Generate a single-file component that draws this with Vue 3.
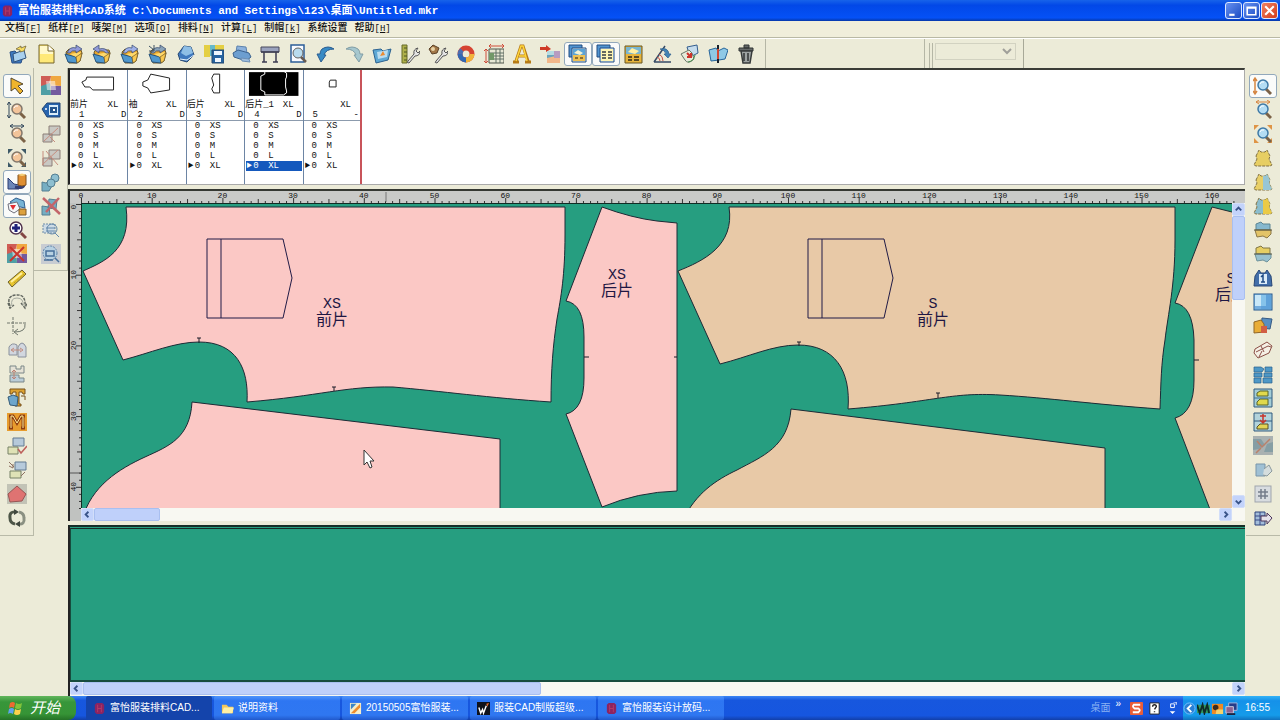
<script setup>
import { ref } from 'vue'

const menus = [
  ['文档', 'F'], ['纸样', 'P'], ['唛架', 'M'], ['选项', 'O'], ['排料', 'N'],
  ['计算', 'L'], ['制帽', 'k'], ['系统设置', ''], ['帮助', 'H']
]

// small pieces shared by several icons
const lens = (fill, rim) =>
  `<path d="M13 13l5 5" stroke="#7b6247" stroke-width="3"/><circle cx="10" cy="9" r="5" fill="${fill}" stroke="${rim}" stroke-width="1.5"/><path d="M7 8q1-3 4-2" stroke="#fff" fill="none"/>`
const folder = (arrow, mirror) =>
  `<path d="M2 8l3-3 4 1h8l1 3-2 8-3 2H5z" fill="#e7a72c" stroke="#6e5a2c"/><path d="M4 18L1 10l11 3 1 6z" fill="#4f97cd" stroke="#28547c"/><path d="M6 10l11-2-2 4-3 1z" fill="#ffd96b"/><path d="M12 13l6-4-2 8-3 2z" fill="#f9c84f" stroke="#6e5a2c" stroke-width=".7"/>` +
  `<path d="${mirror ? 'M17 9Q14 3 7 5V1L1 5l6 4V7q5-1 7 2z' : 'M3 9Q6 2 12 4V1l6 4-6 4V7Q8 6 6 9z'}" fill="${arrow}" stroke="#34466c" stroke-width=".7"/>`
const garment = fill =>
  `<path d="M3 8l3-6 2 2h4l2-2 3 6-1 3 3 6-2 1H3l-2-1 3-6z" fill="${fill}" stroke="#817143" stroke-dasharray="3 1"/>`
const corners = color =>
  `<path d="M1 1h5L1 6zM19 1v5l-5-5zM1 19v-5l5 5zM19 19h-5l5-5z" fill="${color}"/>`
const wrench = '<path d="M8 17l6-7q-1-5 4-6l-2 3 2 2 2-2q0 5-5 5l-6 7q-3 0-1-2z" fill="#e4e4e4" stroke="#555"/>'
const rainbow = '<rect width="20" height="19" fill="#e8b483"/><path d="M0 0h10L7 10H0z" fill="#cf5d55"/><path d="M10 0h10v10l-10-2z" fill="#f0a840"/><path d="M0 10l9-3 1 12H0z" fill="#4f9fa5"/><path d="M10 10h10v9H10z" fill="#735a9e"/><path d="M5 5h9l1 9H6z" fill="#fff" opacity=".5"/>'
const windows = '<path d="M1 1h13v12H1z" fill="#5094d1" stroke="#234c80"/><path d="M4 4h14v14H4z" fill="#d8edf8" stroke="#234c80"/>'

const icons = {
  open: '<path d="M2 8l5-1 2 2h7l-3 10H4z" fill="#3d79c0" stroke="#294f85"/><path d="M5 10l11-4 2 8-12 4z" fill="#a9d0ee" stroke="#31527b"/><path d="M8 5l5-3v2l5-2-2 5-4 1V6z" fill="#f7dc62" stroke="#685b30" stroke-width=".7"/>',
  fresh: '<path d="M3 1h9l6 5v13H3z" fill="#ffe978" stroke="#75642c"/><path d="M4 2h8v5h5v3H4z" fill="#fff8ca"/><path d="M12 1v6h6" fill="#fff" stroke="#75642c"/>',
  importIn: folder('#9199d8'),
  importBack: folder('#9199d8', true),
  merge: folder('#a0b1e8'),
  append: folder('#8aa3b8') + '<path d="M1 2l5 4M6 1v6H1" stroke="#3e5365" fill="none"/>',
  book: '<path d="M8 2l7 1 3 8-7 7-7-2-2-6z" fill="#3f79be" stroke="#284973"/><path d="M8 2l7 1 2 6-7 3-5-3z" fill="#8fbfe6"/><path d="M4 15l7 1 7-5" stroke="#e8f4fc" fill="none"/>',
  save: '<path d="M0 1h14v11H0z" fill="#66b9c9"/><path d="M0 1h6v12H0zM11 1h9v6h-9z" fill="#e4cf44"/><path d="M8 6h12v13H8z" fill="#2563a0" stroke="#244970"/><path d="M10 7h8v4h-8zM11 14h6v4h-6z" fill="#eef6ff"/>',
  print: '<path d="M5 2l9 1 1 6-11-1z" fill="#8db2dc" stroke="#5c82ad"/><path d="M1 9l5-3 11 3 2 4-5 4-12-4z" fill="#6c9ed0" stroke="#3c638f"/><path d="M9 14l8 1 1 3-8-1z" fill="#9ebddd" stroke="#6c8fb5"/>',
  plotter: '<path d="M1 3h18v5H1z" fill="#9aa2bd" stroke="#49495d"/><path d="M4 8v10M16 8v10M2 18h5M13 18h5M1 8h18" stroke="#3d3d52" stroke-width="1.5"/>',
  preview: '<path d="M3 1h13v17H3z" fill="#f8faff" stroke="#2b5e98" stroke-width="1.5"/><circle cx="10" cy="9" r="5" fill="#b8dbee" stroke="#63605d"/><path d="M13 13l5 5" stroke="#695b51" stroke-width="2.5"/>',
  undo: '<path d="M18 5Q12 1 6 5 4 7 4 10H1l4 8 5-7H8q2-6 10-6z" fill="#388bc5" stroke="#2a5c90"/>',
  redo: '<path d="M2 5q6-4 12 0 2 2 2 5h3l-4 8-5-7h2Q10 5 2 5z" fill="#a6c7ce" stroke="#809da5"/>',
  folderBlue: '<path d="M1 6l8-1 2 2 8-2-3 11-12 3z" fill="#5ea8d4" stroke="#2c6290"/><path d="M5 8l11-2-1 7-9 2z" fill="#b9dcf0"/><path d="M8 12l3-5 2 4z" fill="#ec8b31"/>',
  rulerSet: '<path d="M2 1h5v18H2z" fill="#afb04a" stroke="#666a28"/><path d="M4 4h3M4 8h3M4 12h3M4 16h3" stroke="#4c5420"/>' + wrench,
  tools: '<path d="M1 5l4-4 6 3-2 5-5 1z" fill="#a17646" stroke="#5b4228"/><circle cx="5" cy="5" r="2" fill="#e7d2a6"/>' + wrench,
  ring: '<circle cx="10" cy="10" r="6" fill="none" stroke="#d64332" stroke-width="5"/><path d="M4 10a6 6 0 0 0 6 6" fill="none" stroke="#3268b4" stroke-width="5"/><path d="M10 16a6 6 0 0 0 6-6" fill="none" stroke="#f1b33b" stroke-width="5"/><path d="M4 10a6 6 0 0 1 2-4" fill="none" stroke="#4d6db0" stroke-width="5"/>',
  table: '<path d="M5 5h15v14H5z" fill="#e6e7d4" stroke="#50574c"/><path d="M5 9h15M5 12h15M5 15h15M12 5v14M16 5v14" stroke="#617067"/><path d="M5 9h5v7H5z" fill="#719869"/><path d="M6 2h14M7 0L5 2l2 2M18 0l2 2-2 2M2 5v14M0 7l2-2 2 2M0 17l2 2 2-2" stroke="#cf4c3b" fill="none"/>',
  letter: '<path d="M4 17L9 2h2l5 15M7 12h7M1 18h6M13 18h6" fill="none" stroke="#b67b16" stroke-width="3"/><path d="M4 17L9 2h2l4 15M7 12h7" fill="none" stroke="#ffd63d" stroke-width="1.5"/>',
  shift: '<path d="M0 3h6V1l5 4-5 3V6H0z" fill="#cf3a27"/><path d="M7 7h13v12H7z" fill="#69a4bd"/><path d="M7 7h13v4H7z" fill="#b6dbe1"/><path d="M7 14l13-3v8H7z" fill="#f2b78a"/><path d="M14 7h6v7h-6z" fill="#b79bc0"/>',
  sheetMap: windows + '<path d="M5 5h12v6H5z" fill="#5aa3d6"/><path d="M6 9l4-3 5 3-3 2z" fill="#f3f2d4"/><path d="M5 11h12v6H5z" fill="#eec052"/><path d="M7 14h3M12 14h3" stroke="#6c5224" stroke-width="1.5"/>',
  sheetList: windows + '<path d="M5 5h12v12H5z" fill="#fff6b3"/><path d="M6 8h4M12 8h4M6 11h4M12 11h4M6 14h4M12 14h4" stroke="#343d46" stroke-width="1.5"/>',
  chart: '<path d="M1 2h17v17H1z" fill="#e6b43d" stroke="#675724"/><path d="M2 3h15v7H2z" fill="#79b6d2"/><path d="M4 8l4-4 7 3-4 3z" fill="#fff0a4"/><path d="M4 13h4M10 13h5M4 16h4M10 16h5" stroke="#5a4a22" stroke-width="2"/>',
  angle: '<path d="M2 18h17M2 18L13 2" fill="none" stroke="#364a64" stroke-width="1.5"/><path d="M8 5q8-2 9 5h2l-3 4-4-4h2q-1-4-6-5z" fill="#4284b5" stroke="#2d5c8c" stroke-width=".7"/><path d="M7 10q4 2 4 7M5 13q3 1 3 4" fill="none" stroke="#c54d43"/>',
  flip: '<path d="M7 3l10-2 1 8-8 4z" fill="#c5dced" stroke="#345e8e"/><path d="M1 10l8-4 3 3 2 6q-6 6-9 1z" fill="#e6ebda" stroke="#6a7769"/><path d="M7 9l4 4M11 9v4H7" stroke="#ce332c" stroke-width="2" fill="none"/><path d="M15 11q-1 6-7 7" stroke="#489150" fill="none"/>',
  mirror: '<path d="M1 6l7-2 2 3 6-3 4 2-3 9-6 1-8 1z" fill="#8fc9e6" stroke="#28669b"/><path d="M10 1v18" stroke="#17202d" stroke-width="2"/><path d="M10 5v10" stroke="#d34834" stroke-width="2"/>',
  bin: '<path d="M3 4h14v3H3zM8 1h5v3H8z" fill="#656969" stroke="#303535"/><path d="M5 7h11l-2 12H7z" fill="#9da3a2" stroke="#373b3b" stroke-width="1.5"/><path d="M8 9v8M12 9v8" stroke="#313434" stroke-width="1.5"/>',
  pointer: '<path d="M4 2v13l4-3 5 6 3-3-5-5 5-2z" fill="#efb52c" stroke="#544832"/>',
  zoomV: lens('#f3c49a', '#81776c') + '<path d="M2 2v16M0 5l2-3 2 3M0 15l2 3 2-3" fill="none" stroke="#33485c"/>',
  zoomH: lens('#f3c49a', '#81776c') + '<path d="M3 2h14M6 0L3 2l3 2M14 0l3 2-3 2" fill="none" stroke="#33485c"/>',
  zoomFit: corners('#3e5967') + lens('#f4c69b', '#82776b'),
  drop: '<path d="M1 6l6 6 5 1v4H1z" fill="#6c86b8" stroke="#2d3d73"/><path d="M8 15q9 2 9-3" fill="none" stroke="#343f74" stroke-width="3"/><path d="M11 3h8v10q-4 2-8 0z" fill="#e08f32" stroke="#80501f"/><path d="M11 3q4-3 8 0-4 2-8 0z" fill="#f6cf7a"/>',
  bags: '<path d="M3 6l6-4 8 3 1 7-9-2z" fill="#77b4d6" stroke="#315f90"/><path d="M1 8l9-2 3 7-6 4-5-3z" fill="#f5f7f9" stroke="#71717d"/><path d="M3 9l3 5 3-5z" fill="#e12e33"/><path d="M12 13h7v6h-7z" fill="#dda13e" stroke="#7f5927"/>',
  zoomIn: '<circle cx="9" cy="8" r="6" fill="#fff" stroke="#4f314d" stroke-width="1.5"/><path d="M14 13l5 5" stroke="#824643" stroke-width="3"/><path d="M5 8h8M9 4v8" stroke="#20227a" stroke-width="3"/>',
  noColor: rainbow + '<path d="M3 3l14 14M17 3L3 17" stroke="#c9342b" stroke-width="2"/>',
  ruler: '<path d="M1 14L15 2l4 4L5 19z" fill="#e8c52e" stroke="#6c602c"/><path d="M4 14L15 5" stroke="#fff0a0" stroke-width="2"/><path d="M7 15l10-9" stroke="#a88d27" stroke-dasharray="1 1"/>',
  turn: '<path d="M3 14Q-1 4 9 3q10-1 9 11M1 11l2 5 4-3M14 11l4 5 2-5" fill="none" stroke="#61665f" stroke-width="1.5" stroke-dasharray="3 1"/><path d="M5 14Q3 6 10 6t6 8" fill="none" stroke="#a5a99f"/>',
  axis: '<path d="M6 1v17M0 7h19" fill="none" stroke="#70776d" stroke-dasharray="3 1"/><path d="M18 8q1 8-10 8M11 13l-4 3 4 3" fill="none" stroke="#70776d"/>',
  pair: '<path d="M2 7q3-5 8-2v10H2zM11 7q4-8 8 0v10h-8z" fill="#d2d7df" stroke="#8a919c"/><path d="M5 10h9M7 8l-3 2 3 2M13 8l3 2-3 2" stroke="#c28c7c" fill="none"/>',
  pairV: '<path d="M3 2h6v3h5V2h3v7H3z" fill="#e5e2d6" stroke="#7b8788"/><path d="M3 11h9v3h5v4H3z" fill="#b9ccd8" stroke="#7b8788"/><path d="M7 6v9M5 8l2-2 2 2M5 13l2 2 2-2" stroke="#bd8173" fill="none"/>',
  textTool: '<path d="M3 1h15v5h-2l-1-2h-3v12h2v2H8v-2h1V4H6L5 6H3z" fill="#dda22f" stroke="#77511c"/><path d="M1 9l5-2 5 2-1 9-7-1z" fill="#6ea6cb" stroke="#365c79"/><path d="M14 8h4v4" fill="none" stroke="#77511c"/>',
  mark: '<path d="M0 1h20v18H0z" fill="#e79c2e"/><path d="M4 16V4h2l4 7 4-7h2v12M2 16h4M14 16h4M2 4h4M14 4h4" fill="none" stroke="#8d3c12" stroke-width="3"/><path d="M4 16V4h2l4 7 4-7h2v12" fill="none" stroke="#fff29c"/>',
  stackCheck: '<path d="M6 2h11v8H6z" fill="#b6c9da" stroke="#637b91"/><path d="M1 11h10v7H1z" fill="#dfe2b6" stroke="#778167"/><path d="M11 13l3 4 6-7" fill="none" stroke="#bd615c" stroke-width="1.5"/>',
  stackMove: '<path d="M8 2h11v8H8z" fill="#b6cadb" stroke="#637b91"/><path d="M3 11h11v7H3z" fill="#dfe2b6" stroke="#778167"/><path d="M2 2l5 5M18 12l-4 4M2 6l4 2V4" fill="none" stroke="#8c7061"/>',
  house: '<rect width="20" height="20" fill="#c2c3b6"/><path d="M10 2l9 8-4 7-12 1-2-8z" fill="#df7372" stroke="#975553"/>',
  cycle: '<path d="M9 4Q2 3 3 10q0 5 5 6" fill="none" stroke="#4d5547" stroke-width="3"/><path d="M11 16q7 1 6-6 0-5-5-6" fill="none" stroke="#8a9082" stroke-width="3"/><path d="M7 1v6l5-3zM13 19v-6l-5 3z" fill="#41483f"/>',
  palette: rainbow,
  tag: '<path d="M1 9l5-6h13v14H6z" fill="#2764ae" stroke="#244573"/><rect x="8" y="5" width="9" height="10" fill="#d9ecf9"/><path d="M9 7h7v6H9z" fill="#24558e"/><path d="M12 9h2v2h-2z" fill="#fff"/><circle cx="5" cy="9" r="1" fill="#fff"/>',
  copyCut: '<path d="M8 2h11v9H8zM2 10h9v8H2z" fill="#c9c8c3" stroke="#8c7e79"/><path d="M3 17L17 4M9 13l5 5" stroke="#c68d7f"/>',
  copyCuts: '<path d="M8 2h11v9H8zM2 10h9v8H2z" fill="#c9c8c3" stroke="#8c7e79"/><path d="M1 17L17 2M5 3l12 14M2 3v14" stroke="#c68d7f"/>',
  blobs: '<path d="M1 10l4 1 3-2 3 5-3 5H1z" fill="#76aec3" stroke="#547e91"/><circle cx="14" cy="6" r="4" fill="#8ebfd0" stroke="#547e91"/><circle cx="10" cy="11" r="4" fill="#8ebfd0" stroke="#547e91"/>',
  blobsOff: '<path d="M1 10l7 1 1 8H1zM8 3l8 1-1 9-8-1z" fill="#76aec3" stroke="#547e91"/><path d="M2 2l17 16M18 2L5 16" stroke="#c3656a" stroke-width="2.5"/>',
  find: '<path d="M2 4h12v9H2z" fill="#cddbe5" stroke="#6e8ca6" stroke-dasharray="2 1"/><circle cx="11" cy="9" r="5" fill="none" stroke="#6388ab"/><path d="M14 13l4 4M5 8h9M5 11h8" stroke="#6388ab"/>',
  findAll: '<rect width="20" height="20" fill="#c8ccd2"/><circle cx="9" cy="9" r="7" fill="#b8d1e2" stroke="#5d83a9" stroke-dasharray="2 1"/><path d="M5 7h8v5H5zM3 16h9M14 14l4 4" fill="none" stroke="#476f9b" stroke-width="1.5"/>',
  lensV: lens('#b4ddf4', '#3e79a6') + '<path d="M2 2v16M0 5l2-3 2 3M0 15l2 3 2-3" fill="none" stroke="#d58642" stroke-width="1.5"/>',
  lensH: lens('#b4ddf4', '#3e79a6') + '<path d="M3 2h14M6 0L3 2l3 2M14 0l3 2-3 2" fill="none" stroke="#d58642"/>',
  lensFit: corners('#df9445') + lens('#b4ddf4', '#3e79a6'),
  coat: garment('#e7ce63'),
  coatLeft: garment('#e8cf67') + '<path d="M10 4h2l2-2 3 6-1 3 3 6-2 1h-7z" fill="#98c6d4"/>',
  coatRight: garment('#8bbdcd') + '<path d="M10 4h2l2-2 3 6-1 3 3 6-2 1h-7z" fill="#eaca47"/>',
  coatTop: '<path d="M3 4l5-2 2 2h7v6H3z" fill="#86b8ce" stroke="#5d8593"/><path d="M2 10h16v4l-4 4-4-2-6 1z" fill="#e3c468" stroke="#8b7847"/><path d="M1 10h18" stroke="#5b5945"/>',
  coatBottom: '<path d="M3 4l5-2 2 2h7v6H3z" fill="#e6ce63" stroke="#807747"/><path d="M2 10h16v4l-4 4-4-2-6 1z" fill="#98c1cf" stroke="#6e929b"/><path d="M1 10h18" stroke="#5b5945"/>',
  coatOne: '<path d="M2 8l4-6 2 3h4l2-3 4 6 1 10H1z" fill="#426ea9" stroke="#294776"/><path d="M6 6h8v10H6z" fill="#dcecf8"/><path d="M8 9l2-2v7M8 14h4" fill="none" stroke="#1f4b85" stroke-width="1.5"/>',
  blend: '<rect x="1" y="2" width="18" height="16" fill="#86c3ea" stroke="#26598e"/><path d="M2 3h6v14H2z" fill="#c9e8f8"/><path d="M13 3h5v14h-5zM2 14h16v3H2z" fill="#4f94d3" opacity=".7"/>',
  swatches: '<path d="M9 2l10 1-2 10-9-1z" fill="#598fc0" stroke="#375b84"/><path d="M1 6l7-2 3 4v8l-10 1z" fill="#e9ad37" stroke="#916626"/><path d="M8 10h6v7H8z" fill="#d15e44"/>',
  sketch: '<path d="M2 9l12-7 5 4-3 7-11 5-4-5zM3 12l12-6 3 1M6 17l3-6M8 6l3 6" fill="#f5f0e5" stroke="#8a4e45"/>',
  bricks: '<path d="M1 3h7l3 2-2 3H1zM12 3h7v5h-7zM1 9h8v4H1zM11 9h8v4h-8zM1 14h7v5H1zM10 14h9v5h-9z" fill="#4e98c6" stroke="#285e8c" stroke-width=".7"/>',
  panels: '<path d="M1 1h18v18H1z" fill="#a4cdd6" stroke="#315b7e"/><path d="M4 5l3-2h8v5H4zM4 14l3-3h8v6H4z" fill="#e0d94c" stroke="#596427"/><path d="M1 10h18" stroke="#3e7296"/>',
  panelDrop: '<path d="M1 1h18v18H1z" fill="#b2d3db" stroke="#315b7e"/><path d="M1 9h18" stroke="#315b7e"/><path d="M10 2v9M7 4h6M7 8l3 3 3-3" fill="none" stroke="#c8352c" stroke-width="1.5"/><path d="M4 15l3-3h8v5H4z" fill="#e2d354" stroke="#595125"/>',
  fade: '<rect width="20" height="19" fill="#a9b1b1"/><path d="M0 3h8l4 6-6 4-6 1zM14 8l6-2v10h-9z" fill="#869ea4"/><path d="M4 5l5 6 8-8M3 17l5-5" fill="none" stroke="#b9816a" stroke-width="1.5"/>',
  pieceOut: '<path d="M3 4h9v12H3z" fill="#9fc0d4" stroke="#7895aa"/><path d="M11 9l5-4 3 6-5 5-4-1" fill="#d5dddd" stroke="#8b999d"/>',
  hash: '<rect x="2" y="2" width="16" height="16" fill="#d8dce0" stroke="#9fa5ac"/><path d="M8 5v10M12 5v10M5 8h10M5 12h10" stroke="#747d8b" stroke-width="1.5"/>',
  send: '<path d="M2 4h10v13H2z" fill="#a3bdda" stroke="#2d427b"/><path d="M2 8h10M2 12h10M7 4v13" stroke="#3a4b86"/><path d="M8 8h6V5l5 5-5 6v-3H8z" fill="#e5e1e9" stroke="#4d365b"/>'
}

const mainTools = [
  'open', 'fresh', 'importIn', 'importBack', 'merge', 'append', 'book', 'save', 'print', 'plotter',
  'preview', 'undo', 'redo', 'folderBlue', 'rulerSet', 'tools', 'ring', 'table', 'letter', 'shift',
  'sheetMap', 'sheetList', 'chart', 'angle', 'flip', 'mirror', 'bin'
]
const editTools = [
  'pointer', 'zoomV', 'zoomH', 'zoomFit', 'drop', 'bags', 'zoomIn', 'noColor', 'ruler', 'turn', 'axis',
  'pair', 'pairV', 'textTool', 'mark', 'stackCheck', 'stackMove', 'house', 'cycle'
]
const colorTools = ['palette', 'tag', 'copyCut', 'copyCuts', 'blobs', 'blobsOff', 'find', 'findAll']
const viewTools = [
  'lensV', 'lensH', 'lensFit', 'coat', 'coatLeft', 'coatRight', 'coatTop', 'coatBottom', 'coatOne', 'blend',
  'swatches', 'sketch', 'bricks', 'panels', 'panelDrop', 'fade', 'pieceOut', 'hash', 'send'
]
const pressed = ref(['sheetMap', 'sheetList', 'pointer', 'drop', 'bags', 'lensV'])

const toggle = name => {
  pressed.value = pressed.value.includes(name)
    ? pressed.value.filter(n => n !== name)
    : [...pressed.value, name]
}

const sizes = ['XS', 'S', 'M', 'L', 'XL']
const selected = ref(3)
const pieces = [
  { name: '前片', flag: 'D', shape: 'M17 7H44V20H23L20 17H15L12 12 16 10z' },
  { name: '袖', flag: 'D', shape: 'M23 4L42 8V20L23 23 20 18 15 16V12L20 10z' },
  { name: '后片', flag: 'D', shape: 'M27 4H33V23H27L25 19 27 15 25 8z' },
  { name: '后片_1', flag: 'D', shape: 'M20 1H39L42 3V7L41 9V17L42 21V23L39 25H20V22L16 20V6L20 4z' },
  { name: '', flag: '-', shape: 'M27 10h6v7h-7v-5z' }
]

const unit = 7.07
const ticks = Array.from({ length: 164 }, (_, i) => i)
const sideTicks = ticks.slice(0, 44)
const tickSize = i => (i % 10 === 0 ? 5 : i % 5 === 0 ? 4 : 2)

const fabric = [
  { fill: '#fbc8c5', d: 'M126 207H565V235C565 275 561 297 557 319C553 345 551 370 551 402C490 398 440 391 393 387C345 386 320 396 247 402C249 368 236 342 199 342C175 342 150 353 123 360L83 271C103 262 132 251 126 207z' },
  { fill: '#fbc8c5', d: 'M602 207Q632 218 657 221L677 223V491Q638 492 602 507L566 414Q584 410 584 378V337Q584 304 566 301z' },
  { fill: '#fbc8c5', d: 'M192 402L500 439V520H82C91 486 119 469 145 457C169 446 190 438 192 402z' },
  { fill: '#e8c9a7', d: 'M729 207H1175V240C1175 286 1168 314 1165 340C1161 365 1161 382 1160 409C1090 404 1050 398 1000 395C950 392 935 402 848 409C851 371 835 345 798 345C773 345 748 357 720 364L678 271C703 261 735 246 729 207z' },
  { fill: '#e8c9a7', d: 'M791 409L1105 448V520H683C696 493 716 480 737 470C763 456 788 447 791 409z' },
  { fill: '#e8c9a7', d: 'M1212 207L1280 224V525H1216L1175 418Q1194 413 1194 380V340Q1193 306 1175 303z' }
]
const pockets = [207, 808]
const labels = [
  { x: 332, y: 308, size: 'XS', name: '前片' },
  { x: 617, y: 279, size: 'XS', name: '后片' },
  { x: 933, y: 308, size: 'S', name: '前片' },
  { x: 1231, y: 283, size: 'S', name: '后片' }
]

const tasks = [
  { text: '富怡服装排料CAD...', icon: 'app', active: true },
  { text: '说明资料', icon: 'folder' },
  { text: '20150505富怡服装...', icon: 'note' },
  { text: '服装CAD制版超级...', icon: 'video' },
  { text: '富怡服装设计放码...', icon: 'app' }
]
const taskIcons = {
  app: '<path d="M4 1h6l2 2v8l-2 2H4l-2-2V3z" fill="#8c2461"/><path d="M5 3v8M9 3v8M5 7h4" stroke="#b53a68"/>',
  folder: '<path d="M1 3h5l2 2h5v7H1z" fill="#f2c75d"/><path d="M3 6h11l-2 6H1z" fill="#fff0a4"/>',
  note: '<path d="M1 1h12v12H1z" fill="#f6efcb"/><path d="M2 12L12 2v4L6 12z" fill="#ed8d2d"/><path d="M2 2h6L2 8z" fill="#3d86c6"/>',
  video: '<path d="M0 0h14v14H0z" fill="#10131c"/><path d="M2 6l2 6 2-4 1 4 3-8" fill="none" stroke="#fff" stroke-width="1.5"/><path d="M10 2l3-1-2 4z" fill="#ef6b2c"/>'
}
</script>

<template>
  <div class="desktop">
    <header class="titlebar">
      <svg class="app-icon" viewBox="0 0 14 14" v-html="taskIcons.app"></svg>
      <h1>富怡服装排料CAD系统 C:\Documents and Settings\123\桌面\Untitled.mkr</h1>
      <div class="window-buttons">
        <button type="button" aria-label="最小化"><svg viewBox="0 0 14 14"><path d="M3 10h5v2H3z" fill="#fff" /></svg></button>
        <button type="button" aria-label="还原"><svg viewBox="0 0 14 14"><path d="M3 4h8v7H3zM3 4.5h8" fill="none" stroke="#fff" stroke-width="1.5" /></svg></button>
        <button type="button" class="close" aria-label="关闭"><svg viewBox="0 0 14 14"><path d="M3 3l8 8M11 3l-8 8" stroke="#fff" stroke-width="2" /></svg></button>
      </div>
    </header>

    <nav class="menubar">
      <button v-for="[label, key] in menus" :key="label" type="button">{{ label }}<span v-if="key" class="key">[<u>{{ key }}</u>]</span></button>
    </nav>

    <div class="toolbar">
      <div class="main-tools">
        <button v-for="name in mainTools" :key="name" type="button" class="tool" :class="{ pressed: pressed.includes(name) }" :aria-label="name" @click="toggle(name)">
          <svg viewBox="0 0 20 20" v-html="icons[name]"></svg>
        </button>
      </div>
      <div class="combo-bar">
        <span class="grip"></span>
        <select aria-label="size" disabled></select>
      </div>
    </div>

    <div class="workspace">
      <aside class="rails">
        <div class="rail">
          <button v-for="name in editTools" :key="name" type="button" class="tool" :class="{ pressed: pressed.includes(name) }" :aria-label="name" @click="toggle(name)">
            <svg viewBox="0 0 20 20" v-html="icons[name]"></svg>
          </button>
        </div>
        <div class="rail">
          <button v-for="name in colorTools" :key="name" type="button" class="tool" :aria-label="name">
            <svg viewBox="0 0 20 20" v-html="icons[name]"></svg>
          </button>
        </div>
      </aside>

      <main class="panes">
        <section class="sizes">
          <div class="piece-list">
            <article v-for="(piece, p) in pieces" :key="p" class="piece" @click="selected = p">
              <svg class="thumb" viewBox="0 0 58 30">
                <rect v-if="selected === p" x="4" y="2" width="50" height="24" fill="#000" />
                <path :d="piece.shape" fill="none" :stroke="selected === p ? '#fff' : '#222'" />
              </svg>
              <div class="piece-name"><span>{{ piece.name }}</span><span>XL</span></div>
              <div class="piece-number"><span>{{ p + 1 }}</span><span>{{ piece.flag }}</span></div>
              <ul>
                <li v-for="size in sizes" :key="size" :class="{ current: selected === p && size === 'XL' }">
                  <i>{{ size === 'XL' ? '▶' : '' }}</i><span>0</span><span>{{ size }}</span>
                </li>
              </ul>
            </article>
          </div>
        </section>

        <section class="marker">
          <svg class="top-ruler">
            <g v-for="i in ticks" :key="i">
              <path :d="`M${11.5 + i * unit} 12v-${tickSize(i)}`" stroke="#333" />
              <text v-if="i % 10 === 0" :x="11 + i * unit" y="7" text-anchor="middle">{{ i }}</text>
            </g>
            <path d="M316 1v10" stroke="#777" />
          </svg>
          <svg class="side-ruler">
            <g v-for="i in sideTicks" :key="i">
              <path :d="`M11 ${1.5 + i * unit}h-${tickSize(i)}`" stroke="#333" />
              <text v-if="i % 10 === 0" :transform="`translate(6 ${(i ? 1 : 4) + i * unit}) rotate(-90)`" text-anchor="middle">{{ i }}</text>
            </g>
            <path d="M0 270h11" stroke="#555" />
          </svg>
          <svg class="cloth">
            <g transform="translate(-82 -204)">
              <path v-for="(item, i) in fabric" :key="i" :d="item.d" :fill="item.fill" stroke="#1d2a35" />
              <path v-for="x in pockets" :key="x" :d="`M${x} 239h76l9 39-9 40h-76zM${x + 14} 239v79`" fill="none" stroke="#211b46" />
              <path d="M199 338v5M197 338h4M334 387v4M332 387h4M584 357h5M674 357h3M799 342v4M797 342h4M938 393v5M936 393h4M1194 360h5" stroke="#1c1c28" />
              <g v-for="(label, i) in labels" :key="i" class="cloth-label" text-anchor="middle">
                <text :x="label.x" :y="label.y" class="latin">{{ label.size }}</text>
                <text :x="label.x" :y="label.y + 17">{{ label.name }}</text>
              </g>
              <path d="M364 450v15l3-3 3 6 2-1-2-6h4z" fill="#fff" stroke="#333" />
            </g>
          </svg>
          <div class="scroll vertical">
            <button type="button" aria-label="上"><svg viewBox="0 0 12 12"><path d="M3 7l3-3 3 3" /></svg></button>
            <span class="thumb-bar"></span>
            <button type="button" aria-label="下"><svg viewBox="0 0 12 12"><path d="M3 5l3 3 3-3" /></svg></button>
          </div>
          <div class="scroll horizontal">
            <button type="button" aria-label="左"><svg viewBox="0 0 12 12"><path d="M7 3L4 6l3 3" /></svg></button>
            <span class="thumb-bar"></span>
            <button type="button" aria-label="右"><svg viewBox="0 0 12 12"><path d="M5 3l3 3-3 3" /></svg></button>
          </div>
        </section>

        <section class="spare">
          <div class="spare-cloth"></div>
          <div class="scroll horizontal wide">
            <button type="button" aria-label="左"><svg viewBox="0 0 12 12"><path d="M7 3L4 6l3 3" /></svg></button>
            <span class="thumb-bar"></span>
            <button type="button" aria-label="右"><svg viewBox="0 0 12 12"><path d="M5 3l3 3-3 3" /></svg></button>
          </div>
        </section>
      </main>

      <aside class="rail right-rail">
        <button v-for="name in viewTools" :key="name" type="button" class="tool" :class="{ pressed: pressed.includes(name) }" :aria-label="name" @click="toggle(name)">
          <svg viewBox="0 0 20 20" v-html="icons[name]"></svg>
        </button>
      </aside>
    </div>

    <footer class="taskbar">
      <button type="button" class="start">
        <svg viewBox="0 0 16 16"><path d="M2 3q3-2 5 0L6 8Q4 6 1 8z" fill="#ee6a32" /><path d="M8 3q3 2 6 0l-1 5q-3 2-6 0z" fill="#82c33b" /><path d="M1 9q3-2 5 0l-1 5q-3-2-5 0z" fill="#5fa3ef" /><path d="M7 9q3 2 6 0l-1 5q-3 2-6 0z" fill="#fbd24c" /></svg>
        开始
      </button>
      <div class="tasks">
        <button v-for="(task, i) in tasks" :key="i" type="button" :class="{ active: task.active }">
          <svg viewBox="0 0 14 14" v-html="taskIcons[task.icon]"></svg>
          <span>{{ task.text }}</span>
        </button>
      </div>
      <div class="language">
        <span class="dim">桌面</span><span class="more">»</span>
        <svg viewBox="0 0 14 14"><rect width="14" height="14" rx="1" fill="#e95d38" /><path d="M11 3H4q-2 2 1 4h4q3 2 0 4H3" fill="none" stroke="#fff" stroke-width="2" /></svg>
        <svg viewBox="0 0 14 14"><path d="M2 1h10v12H2z" fill="#fff" stroke="#222" /><path d="M5 5q0-2 2-2t2 2l-2 3M7 10v1" fill="none" stroke="#222" stroke-width="1.5" /></svg>
        <svg viewBox="0 0 14 14"><path d="M5 2h4v4H5zM8 0h3v3" fill="none" stroke="#fff" /><path d="M4 10h6l-3 3z" fill="#fff" /></svg>
      </div>
      <div class="tray">
        <svg viewBox="0 0 14 14"><circle cx="7" cy="7" r="6" fill="#287fd5" stroke="#7bc4ff" /><path d="M9 3L5 7l4 4" fill="none" stroke="#fff" stroke-width="2" /></svg>
        <svg viewBox="0 0 14 14"><path d="M0 3h14v9H0z" fill="#2f9a62" /><path d="M0 3l3 9 3-9 2 9 3-9 2 9" fill="none" stroke="#102a29" stroke-width="2" /></svg>
        <svg viewBox="0 0 14 14"><path d="M1 2h12v11H1z" fill="#ef8a25" /><circle cx="5" cy="6" r="3" fill="#392a21" /><path d="M6 8h7v5H5z" fill="#f5d26a" /></svg>
        <svg viewBox="0 0 14 14"><path d="M4 1h9v8H4z" fill="#273b88" stroke="#a8b8dd" /><path d="M1 5h8v7H1z" fill="#8d6291" stroke="#ccd0e5" /><path d="M2 13h9" stroke="#1b2440" stroke-width="2" /></svg>
        <time>16:55</time>
      </div>
    </footer>
  </div>
</template>

<style>
body {
  margin: 0;
  background: #ecebd8;
}
</style>

<style scoped>
.desktop {
  display: flex;
  flex-direction: column;
  min-height: 100vh;
  box-sizing: border-box;
  overflow: hidden;
  background: #ecebd8;
  font-family: "Liberation Mono", "Noto Sans CJK SC", monospace;
  font-size: 10px;
  line-height: 10px;
  color: #111;
}

button {
  padding: 0;
  border: 0;
  background: none;
  font: inherit;
  color: inherit;
}

svg {
  display: block;
}

.titlebar {
  display: flex;
  align-items: center;
  height: 21px;
  padding: 0 2px 0 1px;
  box-sizing: border-box;
  background: linear-gradient(#1763ea, #0248e7 25%, #0551f6 85%, #0637a8);
  color: #fff;
}

.app-icon {
  width: 13px;
  height: 14px;
  margin-right: 4px;
}

.titlebar h1 {
  flex: 1;
  margin: 0;
  font-size: 11px;
  line-height: 16px;
  font-weight: bold;
  white-space: nowrap;
}

.window-buttons {
  display: flex;
  gap: 1px;
}

.window-buttons button {
  width: 17px;
  height: 17px;
  box-sizing: border-box;
  border: 1px solid #dce8ff;
  border-radius: 3px;
  background: linear-gradient(135deg, #6791f0, #194bc4);
}

.window-buttons .close {
  background: linear-gradient(135deg, #ee8061, #d43d1c);
}

.menubar {
  display: flex;
  gap: 7px;
  height: 16px;
  padding-left: 5px;
  border-bottom: 1px solid #b9b9a5;
  background: #f0eedb;
}

.menubar button {
  white-space: nowrap;
  font-weight: 500;
}

.key {
  font-size: 9px;
}

.toolbar {
  display: flex;
  height: 30px;
  border-top: 1px solid #fff;
  box-sizing: border-box;
}

.main-tools {
  display: flex;
  align-items: center;
  padding: 0 5px 0 4px;
  border-right: 1px solid #b5b6a5;
}

.tool {
  display: grid;
  place-items: center;
  width: 28px;
  height: 24px;
  box-sizing: border-box;
  border: 1px solid transparent;
  border-radius: 3px;
}

.tool svg {
  width: 20px;
  height: 20px;
}

.tool.pressed {
  border-color: #92a8bb;
  background: #fafbfa;
}

.combo-bar {
  display: flex;
  align-items: flex-start;
  gap: 2px;
  width: 100px;
  margin-left: 158px;
  padding: 4px 0 0 4px;
  box-sizing: border-box;
  border-left: 1px solid #b5b6a5;
  border-right: 1px solid #a8a998;
}

.grip {
  width: 4px;
  height: 25px;
  border-left: 1px solid #b5b6a5;
  border-right: 1px solid #b5b6a5;
  box-sizing: border-box;
}

.combo-bar select {
  width: 81px;
  height: 17px;
  border: 1px solid #c8c8b8;
  background: #ecebd8;
}

.workspace {
  display: flex;
  flex: 1;
}

.rails {
  display: flex;
  align-items: flex-start;
  width: 68px;
}

.rail {
  display: flex;
  flex: none;
  flex-direction: column;
  align-items: center;
  width: 34px;
  padding: 6px 0 4px;
  box-sizing: border-box;
  border-right: 1px solid #b9baa8;
  border-bottom: 1px solid #b9baa8;
}

.rails .rail:first-child {
  padding-bottom: 5px;
}

.panes {
  display: flex;
  flex: 1;
  flex-direction: column;
  gap: 4px;
  min-width: 0;
}

.sizes {
  height: 117px;
  box-sizing: border-box;
  border: 1px solid #aaa;
  border-top: 2px solid #3b3d37;
  border-left: 2px solid #222;
  background: #fff;
}

.piece-list {
  display: grid;
  grid-template-columns: repeat(5, 1fr);
  width: 292px;
  height: 100%;
}

.piece {
  display: flex;
  flex-direction: column;
  min-width: 0;
  border-right: 1px solid #6d85a4;
  font-size: 9px;
}

.piece:last-child {
  border-right: 2px solid #c8545a;
}

.thumb {
  width: 100%;
  height: 30px;
}

.piece-name,
.piece-number {
  display: flex;
  justify-content: space-between;
  height: 10px;
  padding-right: 9px;
  white-space: nowrap;
}

.piece-number {
  padding: 0 1px 0 9px;
  border-bottom: 1px solid #8c9bad;
}

.piece ul {
  margin: 0;
  padding: 0 1px;
  list-style: none;
}

.piece li {
  display: grid;
  grid-template-columns: 7px 15px 1fr;
  align-items: center;
  height: 10px;
}

.piece i {
  font-size: 6px;
  font-style: normal;
}

.current {
  background: #1559bd;
  color: #fff;
}

.marker {
  display: grid;
  grid-template-columns: 11px 1fr 13px;
  grid-template-rows: 12px 305px 13px;
  border-top: 2px solid #353832;
  border-left: 2px solid #222;
}

.top-ruler {
  grid-column: 1 / 4;
  width: 100%;
  height: 12px;
  background: #c9cac8;
}

.side-ruler {
  grid-row: 2 / 4;
  width: 11px;
  height: 100%;
  background: #c0c2c0;
}

.top-ruler text,
.side-ruler text {
  font-size: 8px;
  fill: #111;
}

.cloth {
  width: 100%;
  height: 100%;
  box-sizing: border-box;
  border-top: 1px solid #102c25;
  border-left: 1px solid #102c25;
  background: #269e80;
}

.cloth-label {
  font-size: 16px;
  fill: #1e1743;
}

.cloth-label .latin {
  font-size: 15px;
}

.scroll {
  display: flex;
  background: #f8f8f2;
}

.scroll.vertical {
  flex-direction: column;
}

.scroll.horizontal {
  grid-column: 2 / 4;
  padding-right: 13px;
}

.scroll button {
  flex: none;
  width: 13px;
  height: 13px;
  border: 1px solid #d2def9;
  border-radius: 2px;
  box-sizing: border-box;
  background: #c3d3fb;
}

.scroll path {
  fill: none;
  stroke: #385388;
  stroke-width: 2;
}

.thumb-bar {
  box-sizing: border-box;
  border: 1px solid #a9bff0;
  border-radius: 2px;
  background: #bfd0fa;
}

.vertical .thumb-bar {
  height: 84px;
}

.horizontal .thumb-bar {
  width: 66px;
}

.scroll.horizontal button:last-child {
  margin-left: auto;
}

.scroll.vertical button:last-child {
  margin-top: auto;
}

.spare {
  display: flex;
  flex: 1;
  flex-direction: column;
  border-top: 2px solid #162e27;
  border-left: 2px solid #222;
  background: #269e80;
}

.spare-cloth {
  flex: 1;
  margin-top: 1px;
  border-top: 1px solid #162e27;
  border-bottom: 2px solid #174c3e;
  border-left: 1px solid #174c3e;
}

.scroll.horizontal.wide {
  padding: 0 0 1px;
}

.wide .thumb-bar {
  width: 39%;
}

.right-rail {
  margin-left: 1px;
  align-self: flex-start;
  padding-bottom: 5px;
  border-right: 0;
}

.taskbar {
  display: flex;
  height: 24px;
  background: linear-gradient(#3c86f4, #1757de 18%, #1656df 82%, #123fa9);
  color: #fff;
  font-family: "Liberation Sans", "Noto Sans CJK SC", sans-serif;
}

.start {
  display: flex;
  align-items: center;
  gap: 6px;
  width: 76px;
  padding-left: 8px;
  border-radius: 0 8px 8px 0;
  background: linear-gradient(#62b65c, #37963a 25%, #369436 75%, #257127);
  font-size: 15px;
  font-style: italic;
}

.start svg {
  width: 16px;
  height: 16px;
}

.tasks {
  display: flex;
  flex: 1;
  gap: 2px;
  margin-left: 10px;
}

.tasks button {
  display: flex;
  align-items: center;
  gap: 4px;
  width: 126px;
  padding-left: 7px;
  border-radius: 2px;
  background: linear-gradient(#5095fb, #2e76f2 20%, #2f77f1 80%, #2159cb);
  white-space: nowrap;
}

.tasks .active {
  background: #1444ab;
}

.tasks svg {
  width: 13px;
  height: 13px;
}

.language,
.tray {
  display: flex;
  align-items: center;
  gap: 5px;
}

.language {
  padding-right: 4px;
}

.dim {
  color: #8ab2f3;
}

.more {
  align-self: flex-start;
  margin: 3px 4px 0 0;
}

.language svg,
.tray svg {
  width: 13px;
  height: 13px;
}

.tray {
  gap: 1px;
  padding-right: 10px;
  background: linear-gradient(#34b3f7, #1591e9 20%, #159bea 80%, #1171bd);
}

.tray time {
  margin-left: 6px;
}
</style>
